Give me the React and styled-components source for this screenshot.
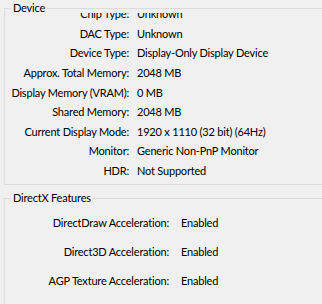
import React from "react";
import styled, { createGlobalStyle } from "styled-components";

const GlobalStyle = createGlobalStyle`
  html, body {
    margin: 0;
    padding: 0;
    background: #f0f0f0;
  }
  body {
    font-family: Lato, "Liberation Sans", sans-serif;
    font-size: 11px;
    letter-spacing: -0.2px;
    color: #000;
  }
`;

const Page = styled.div`
  width: 322px;
  height: 304px;
  overflow: hidden;
  padding-left: 4px;
  box-sizing: border-box;
`;

const Group = styled.section`
  position: relative;
  width: 340px;
  margin-top: ${(p) => p.$gap}px;
  height: ${(p) => p.$height}px;
  border: 1px solid #dcdcdc;
  box-sizing: border-box;
  padding-top: ${(p) => p.$padTop}px;
`;

const Caption = styled.span`
  position: absolute;
  top: -9px;
  left: 6px;
  padding: 0 2px;
  line-height: 16px;
  background: #f0f0f0;
`;

const ScrollArea = styled.div`
  height: 171px;
  overflow: hidden;
`;

const List = styled.div`
  margin-top: -9px;
`;

const Row = styled.div`
  display: grid;
  grid-template-columns: ${(p) => p.$label}px auto;
  column-gap: ${(p) => p.$gap}px;
  height: ${(p) => p.$height}px;
  align-items: center;
  white-space: nowrap;
`;

const Label = styled.span`
  text-align: right;
`;

const Value = styled.span``;

const device = [
  ["Chip Type:", "Unknown"],
  ["DAC Type:", "Unknown"],
  ["Device Type:", "Display-Only Display Device"],
  ["Approx. Total Memory:", "2048 MB"],
  ["Display Memory (VRAM):", "0 MB"],
  ["Shared Memory:", "2048 MB"],
  ["Current Display Mode:", "1920 x 1110 (32 bit) (64Hz)"],
  ["Monitor:", "Generic Non-PnP Monitor"],
  ["HDR:", "Not Supported"],
];

const features = [
  ["DirectDraw Acceleration:", "Enabled"],
  ["Direct3D Acceleration:", "Enabled"],
  ["AGP Texture Acceleration:", "Enabled"],
];

export default function App() {
  return (
    <Page>
      <GlobalStyle />
      <Group $gap={8} $height={177} $padTop={4}>
        <Caption>Device</Caption>
        <ScrollArea>
          <List>
            {device.map(([k, v]) => (
              <Row key={k} $label={124} $gap={8} $height={19.6}>
                <Label>{k}</Label>
                <Value>{v}</Value>
              </Row>
            ))}
          </List>
        </ScrollArea>
      </Group>
      <Group $gap={13} $height={120} $padTop={9}>
        <Caption>DirectX Features</Caption>
        {features.map(([k, v]) => (
          <Row key={k} $label={164} $gap={12} $height={29}>
            <Label>{k}</Label>
            <Value>{v}</Value>
          </Row>
        ))}
      </Group>
    </Page>
  );
}
